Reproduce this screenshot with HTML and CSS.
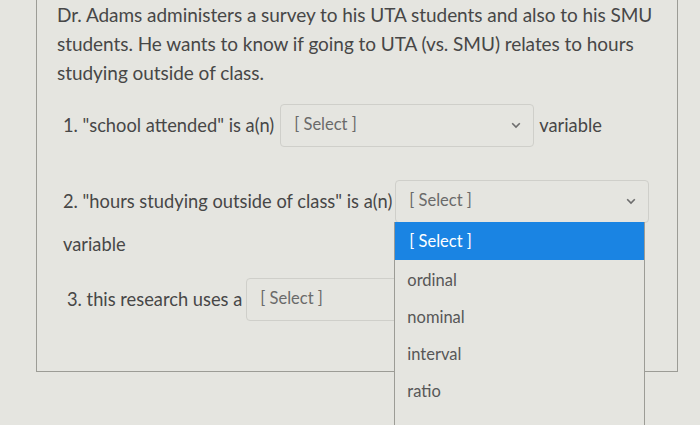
FILE: index.html
```html
<!DOCTYPE html>
<html>
<head>
<meta charset="utf-8">
<link rel="stylesheet" href="styles.css">
</head>
<body>
<div class="frame">
  <p class="prompt">Dr. Adams administers a survey to his UTA students and also to his SMU students. He wants to know if going to UTA (vs. SMU) relates to hours studying outside of class.</p>

  <div class="item item-1">
    <span class="label">1. "school attended" is a(n)</span>
    <span class="select"><span class="sel-text">[ Select ]</span><svg class="chev" width="10" height="7" viewBox="0 0 10 7"><path d="M1.2 1.2 L5 5 L8.8 1.2" fill="none" stroke="#6d6d6d" stroke-width="1.6"/></svg></span>
    <span class="label">variable</span>
  </div>

  <div class="item item-2">
    <span class="label">2. "hours studying outside of class" is a(n)</span>
    <span class="select select-open"><span class="sel-text">[ Select ]</span><svg class="chev" width="10" height="7" viewBox="0 0 10 7"><path d="M1.2 1.2 L5 5 L8.8 1.2" fill="none" stroke="#6d6d6d" stroke-width="1.6"/></svg>
      <ul class="menu">
        <li class="active">[ Select ]</li>
        <li>ordinal</li>
        <li>nominal</li>
        <li>interval</li>
        <li>ratio</li>
      </ul>
    </span>
    <span class="label">variable</span>
  </div>

  <div class="item item-3">
    <span class="label">3. this research uses a</span>
    <span class="select"><span class="sel-text">[ Select ]</span></span>
  </div>
</div>
</body>
</html>
```
FILE: styles.css
```css
html, body {
  margin: 0;
  padding: 0;
  background: #e5e5e0;
  overflow: hidden;
}

body {
  font-family: Lato, "Open Sans", sans-serif;
  color: #474747;
  height: 425px;
}

.frame {
  margin-left: 36px;
  width: 642px;
  height: 372px;
  box-sizing: border-box;
  border-left: 1px solid #9c9c96;
  border-right: 1px solid #9c9c96;
  border-bottom: 1px solid #9c9c96;
  padding: 0 10px 0 20px;
}

.prompt {
  margin: 0;
  font-size: 19px;
  line-height: 29px;
  letter-spacing: -0.05px;
}

.item {
  display: flex;
  flex-wrap: wrap;
  align-items: center;
  padding-left: 6px;
  font-size: 18.3px;
}

.item-1 { margin-top: 17px; }
.item-2 { margin-top: 33px; }
.item-3 { margin-top: 12px; padding-left: 10px; }

.label {
  line-height: 43px;
}

.item-1 .label:last-child { margin-left: 5px; }

.select {
  position: relative;
  display: flex;
  align-items: center;
  justify-content: space-between;
  width: 254px;
  height: 43px;
  box-sizing: border-box;
  margin-left: 6px;
  border: 1px solid #cfcfca;
  border-radius: 4px;
  padding: 0 12px 3px 13px;
  font-size: 16.5px;
  color: #6a6a6a;
}

.item-2 .select { margin-left: 3px; }
.item-3 .select { margin-left: 4px; width: 200px; }

.chev { margin-top: 2px; }

.menu {
  position: absolute;
  top: 41px;
  left: -2px;
  width: 251px;
  height: 203px;
  overflow: hidden;
  box-sizing: border-box;
  margin: 0;
  padding: 0;
  list-style: none;
  background: #e5e5e0;
  border-left: 1px solid #9c9c96;
  border-right: 1px solid #9c9c96;
  z-index: 5;
  font-size: 16.5px;
  color: #575757;
}

.menu li {
  height: 37px;
  box-sizing: border-box;
  padding-top: 3px;
  line-height: 34px;
  padding-left: 12px;
}

.menu li.active {
  height: 38px;
  padding-top: 0;
  line-height: 38px;
  background: #1a84e3;
  color: #ffffff;
  padding-left: 14px;
}
```
